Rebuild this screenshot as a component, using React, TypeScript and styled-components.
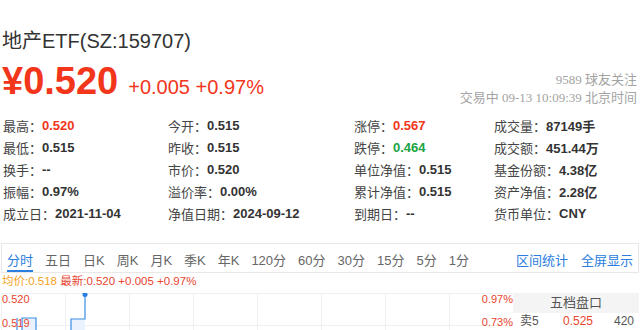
import React from "react";
import styled, { createGlobalStyle } from "styled-components";

const GlobalStyle = createGlobalStyle`
  html, body { margin: 0; padding: 0; background: #fff; }
  body {
    font-family: "Liberation Sans", Arial, "Noto Sans CJK SC", sans-serif;
    color: #333;
    overflow: hidden;
  }
`;

const RED = "#f2361b";
const GREEN = "#1aa342";
const BLUE = "#2b7de0";

const Page = styled.div`
  padding: 29px 1px 0 1px;
  width: 638px;
`;

const Title = styled.h1`
  margin: 0;
  font-size: 20px;
  line-height: 24px;
  font-weight: normal;
  color: #333;
  padding-left: 1px;
`;

const PriceRow = styled.div`
  display: flex;
  justify-content: space-between;
  align-items: flex-start;
  margin-top: 8px;
`;

const PriceLeft = styled.div`
  display: flex;
  align-items: baseline;
  gap: 10px;
  padding-left: 1px;
`;

const Price = styled.span`
  font-size: 38px;
  line-height: 40px;
  font-weight: bold;
  color: ${RED};
`;

const Change = styled.span`
  font-size: 20px;
  color: ${RED};
`;

const MetaBlock = styled.div`
  margin-top: 10px;
  text-align: right;
  font-family: "Liberation Serif", "Noto Sans CJK SC", serif;
  font-size: 13px;
  line-height: 18px;
  color: #a3a3a3;
  padding-right: 2px;
`;

const StatsGrid = styled.div`
  display: grid;
  grid-template-columns: 165px 186px 140px 1fr;
  grid-auto-rows: 22px;
  margin-top: 7px;
  padding-left: 2px;
`;

const Stat = styled.div`
  display: flex;
  align-items: center;
  font-size: 13px;
  white-space: nowrap;
`;

const StatLabel = styled.span`
  color: #444;
`;

const StatValue = styled.span<{ $tone?: "up" | "down" }>`
  font-weight: bold;
  color: ${(p) => (p.$tone === "up" ? RED : p.$tone === "down" ? GREEN : "#333")};
`;

const TabBar = styled.div`
  margin-top: 19px;
  height: 28px;
  border: 1px solid #e8e8e8;
  display: flex;
  justify-content: space-between;
  align-items: stretch;
  padding: 0 5px;
`;

const TabGroup = styled.div`
  display: flex;
  gap: 12px;
`;

const Tab = styled.div<{ $active?: boolean }>`
  box-sizing: border-box;
  height: 28px;
  padding-top: 9px;
  font-size: 13px;
  line-height: 16px;
  color: ${(p) => (p.$active ? BLUE : "#666")};
  border-bottom: 2px solid ${(p) => (p.$active ? BLUE : "transparent")};
`;

const LinkGroup = styled.div`
  display: flex;
  gap: 13px;
  padding-top: 9px;
  font-size: 13px;
  line-height: 16px;
  color: ${BLUE};
`;

const InfoLine = styled.div`
  margin-top: 1px;
  font-size: 11.5px;
  line-height: 14px;
  padding-left: 1px;
  white-space: nowrap;
`;

const Avg = styled.span`
  color: #f5a11c;
`;

const Latest = styled.span`
  color: #e8452e;
`;

const ChartRow = styled.div`
  display: flex;
  margin-top: 5px;
`;

const ChartArea = styled.div`
  position: relative;
  flex: 0 0 512px;
  height: 60px;
`;

const AxisLabel = styled.span<{ $side: "left" | "right"; $top: number }>`
  position: absolute;
  ${(p) => (p.$side === "left" ? "left: 1px;" : "right: 0;")}
  top: ${(p) => p.$top}px;
  font-size: 11px;
  line-height: 12px;
  color: #e8452e;
`;

const SidePanel = styled.div`
  flex: 1;
`;

const PanelHeader = styled.div`
  height: 20px;
  line-height: 20px;
  background: #f4f4f4;
  text-align: center;
  font-size: 13px;
  color: #555;
`;

const QuoteRow = styled.div`
  display: grid;
  grid-template-columns: 43px 1fr auto;
  height: 17px;
  line-height: 17px;
  padding: 0 5px 0 7px;
  font-size: 12px;
  color: #555;
`;

const QuotePrice = styled.span`
  color: #e8452e;
`;

const stats: { label: string; value: string; tone?: "up" | "down" }[][] = [
  [
    { label: "最高：", value: "0.520", tone: "up" },
    { label: "今开：", value: "0.515" },
    { label: "涨停：", value: "0.567", tone: "up" },
    { label: "成交量：", value: "87149手" },
  ],
  [
    { label: "最低：", value: "0.515" },
    { label: "昨收：", value: "0.515" },
    { label: "跌停：", value: "0.464", tone: "down" },
    { label: "成交额：", value: "451.44万" },
  ],
  [
    { label: "换手：", value: "--" },
    { label: "市价：", value: "0.520" },
    { label: "单位净值：", value: "0.515" },
    { label: "基金份额：", value: "4.38亿" },
  ],
  [
    { label: "振幅：", value: "0.97%" },
    { label: "溢价率：", value: "0.00%" },
    { label: "累计净值：", value: "0.515" },
    { label: "资产净值：", value: "2.28亿" },
  ],
  [
    { label: "成立日：", value: "2021-11-04" },
    { label: "净值日期：", value: "2024-09-12" },
    { label: "到期日：", value: "--" },
    { label: "货币单位：", value: "CNY" },
  ],
];

const tabs = ["分时", "五日", "日K", "周K", "月K", "季K", "年K", "120分", "60分", "30分", "15分", "5分", "1分"];

function ChartSvg() {
  const verticals = Array.from({ length: 9 }, (_, i) => i * 64 + 0.5);
  return (
    <svg width="512" height="60" viewBox="0 0 512 60" style={{ display: "block" }}>
      {[0.5, 32.5].map((y) => (
        <line key={y} x1="0" x2="512" y1={y} y2={y} stroke="#f0f0f0" strokeWidth="1" />
      ))}
      {verticals.map((x) => (
        <line key={x} x1={x} x2={x} y1="0" y2="60" stroke="#f0f0f0" strokeWidth="1" />
      ))}
      <path d="M21 60 V25 H35 V60 Z" fill="#eaf3fd" />
      <path d="M70 60 V26 H84 V60 Z" fill="#eaf3fd" />
      <path d="M16 60 V25" stroke="#3a8ee6" strokeWidth="1.2" fill="none" />
      <path d="M21 60 V25 H35 V60" stroke="#3a8ee6" strokeWidth="1.2" fill="none" />
      <path d="M70 60 V26 H84 V1" stroke="#3a8ee6" strokeWidth="1.2" fill="none" />
      <circle cx="84" cy="1.5" r="2.5" fill="#2b7de0" />
    </svg>
  );
}

export default function App() {
  return (
    <>
      <GlobalStyle />
      <Page>
        <Title>地产ETF(SZ:159707)</Title>
        <PriceRow>
          <PriceLeft>
            <Price>¥0.520</Price>
            <Change>+0.005 +0.97%</Change>
          </PriceLeft>
          <MetaBlock>
            <div>9589 球友关注</div>
            <div>交易中 09-13 10:09:39 北京时间</div>
          </MetaBlock>
        </PriceRow>
        <StatsGrid>
          {stats.flat().map((s) => (
            <Stat key={s.label}>
              <StatLabel>{s.label}</StatLabel>
              <StatValue $tone={s.tone}>{s.value}</StatValue>
            </Stat>
          ))}
        </StatsGrid>
        <TabBar>
          <TabGroup>
            {tabs.map((t, i) => (
              <Tab key={t} $active={i === 0}>
                {t}
              </Tab>
            ))}
          </TabGroup>
          <LinkGroup>
            <span>区间统计</span>
            <span>全屏显示</span>
          </LinkGroup>
        </TabBar>
        <InfoLine>
          <Avg>均价:0.518</Avg> <Latest>最新:0.520 +0.005 +0.97%</Latest>
        </InfoLine>
        <ChartRow>
          <ChartArea>
            <ChartSvg />
            <AxisLabel $side="left" $top={0}>0.520</AxisLabel>
            <AxisLabel $side="left" $top={24}>0.519</AxisLabel>
            <AxisLabel $side="right" $top={0}>0.97%</AxisLabel>
            <AxisLabel $side="right" $top={23}>0.73%</AxisLabel>
          </ChartArea>
          <SidePanel>
            <PanelHeader>五档盘口</PanelHeader>
            <QuoteRow>
              <span>卖5</span>
              <QuotePrice>0.525</QuotePrice>
              <span>420</span>
            </QuoteRow>
          </SidePanel>
        </ChartRow>
      </Page>
    </>
  );
}
